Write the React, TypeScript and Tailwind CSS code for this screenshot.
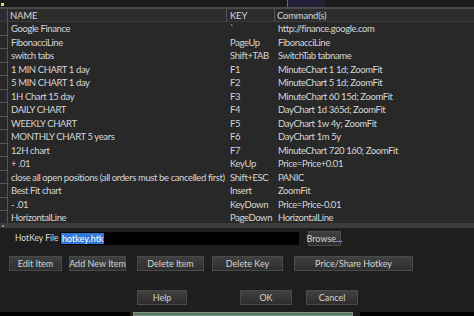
const rows: Array<[string, string, string]> = [
  ['Google Finance', '`', 'http://finance.google.com'],
  ['FibonacciLine', 'PageUp', 'FibonacciLine'],
  ['switch  tabs', 'Shift+TAB', 'SwitchTab tabname'],
  ['1 MIN CHART 1 day', 'F1', 'MinuteChart 1 1d; ZoomFit'],
  ['5 MIN CHART 1 day', 'F2', 'MinuteChart 5 1d; ZoomFit'],
  ['1H Chart 15 day', 'F3', 'MinuteChart 60 15d; ZoomFit'],
  ['DAILY CHART', 'F4', 'DayChart 1d 365d; ZoomFit'],
  ['WEEKLY CHART', 'F5', 'DayChart 1w 4y; ZoomFit'],
  ['MONTHLY CHART 5 years', 'F6', 'DayChart 1m 5y'],
  ['12H chart', 'F7', 'MinuteChart 720 160; ZoomFit'],
  ['+ .01', 'KeyUp', 'Price=Price+0.01'],
  ['close all open positions (all orders must be cancelled first)', 'Shift+ESC', 'PANIC'],
  ['Best Fit chart', 'Insert', 'ZoomFit'],
  ['- .01', 'KeyDown', 'Price=Price-0.01'],
  ['HorizontalLine', 'PageDown', 'HorizontalLine'],
]

function Btn({ label, className }: { label: string; className: string }) {
  return (
    <div
      className={`flex items-center justify-center h-[15px] whitespace-nowrap border border-[#4a4a4a] bg-gradient-to-b from-[#404040] to-[#2e2e2e] text-[9px] text-[#d4d4d4] ${className}`}
    >
      {label}
    </div>
  )
}

export default function App() {
  return (
    <div
      className="w-[474px] h-[316px] overflow-hidden bg-[#1e1e1e] text-[#d6d6d6] flex flex-col"
      style={{ fontFamily: 'Lato, "Noto Sans", sans-serif' }}
    >
      {/* title strip */}
      <div className="h-[7px] bg-[#1a1a1a] flex">
        <div className="w-[287px] flex items-end pl-[1px] pb-[1px]">
          <div className="w-[3px] h-[3px] bg-[#e8d86a]" />
        </div>
        <div className="w-[1px] bg-[#6a6a6a]" />
        <div className="w-[37px] bg-[#222036]" />
      </div>
      <div className="h-[2px] bg-[#4a4a4a]" />
      <div className="h-[214px] bg-[#282828] overflow-hidden">
        <div className="flex h-[13px] bg-[#2c2c2c] border-b border-[#3c3c3c] text-[9.5px] leading-[13px] tracking-[-0.2px]">
          <div className="w-[8px] border-r border-[#555]" />
          <div className="w-[219px] pl-[2px] border-r border-[#555]">NAME</div>
          <div className="w-[48px] pl-[3px] border-r border-[#555]">KEY</div>
          <div className="flex-1 pl-[2px]">Command(s)</div>
        </div>
        {rows.map(([name, key, cmd], i) => (
          <div key={i} className="flex h-[13.5px] text-[9.5px] leading-[14px] whitespace-nowrap tracking-[-0.4px]">
            <div className="w-[8px] border-r border-b border-[#555]" />
            <div className="w-[219px] pl-[3px] overflow-hidden">{name}</div>
            <div className="w-[48px] pl-[3px]">{key}</div>
            <div className="flex-1 pl-[3px]">{cmd}</div>
          </div>
        ))}
      </div>
      <div className="h-[5px] bg-[#3c3c3c] flex items-center pl-[2px]">
        <div className="w-[2px] h-[2px] bg-[#888]" />
      </div>
      <div className="flex items-center h-[13px] mt-[4px]">
        <div className="w-[60px] pl-[15px] whitespace-nowrap text-[8.5px] text-[#dcdcdc]">HotKey File</div>
        <div className="w-[239px] h-[13px] bg-black flex items-center pl-[1px]">
          <span className="bg-[#2f7ad8] text-white text-[9px] leading-[11px] px-[1px]">hotkey.htk</span>
        </div>
        <Btn label="Browse..." className="ml-[9px] w-[33px] h-[14px] text-[8.5px]" />
      </div>
      <div className="flex items-center mt-[11px] h-[15px]">
        <Btn label="Edit Item" className="ml-[9px] w-[53px]" />
        <Btn label="Add New Item" className="ml-[7px] w-[57px]" />
        <Btn label="Delete Item" className="ml-[11px] w-[67px]" />
        <Btn label="Delete Key" className="ml-[8px] w-[71px]" />
        <Btn label="Price/Share Hotkey" className="ml-[11px] w-[119px]" />
      </div>
      <div className="flex items-center mt-[19px] h-[15px]">
        <Btn label="Help" className="ml-[137px] w-[50px]" />
        <Btn label="OK" className="ml-[53px] w-[52px]" />
        <Btn label="Cancel" className="ml-[14px] w-[52px]" />
      </div>
      <div className="flex mt-auto h-[4px]">
        <div className="w-[130px] bg-black" />
        <div className="w-[220px] ml-[3px] bg-[#4d7a52] border border-[#8a8a8a]" />
        <div className="flex-1 ml-[7px] bg-black" />
      </div>
    </div>
  )
}
